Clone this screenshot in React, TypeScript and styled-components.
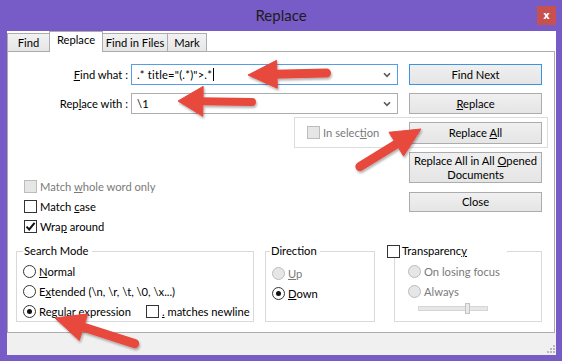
import React from 'react';
import styled, { createGlobalStyle, css } from 'styled-components';

const GlobalStyle = createGlobalStyle`
	html, body {
		margin: 0;
		padding: 0;
	}
	body {
		font-family: Lato, "Noto Sans", sans-serif;
		font-size: 11.2px;
		color: #000;
	}
	fieldset, legend {
		margin: 0;
		padding: 0;
	}
`;

const Screen = styled.div`
	position: relative;
	width: 562px;
	height: 361px;
	background: #775bc6;
	display: flex;
	flex-direction: column;
	overflow: hidden;
`;

const TitleBar = styled.div`
	height: 31px;
	flex-shrink: 0;
	display: grid;
	grid-template-columns: 1fr auto 1fr;
	align-items: start;
	padding: 0 6px;
`;

const Title = styled.div`
	grid-column: 2;
	font-size: 15px;
	line-height: 31px;
	color: #1c1c1c;
`;

const CloseButton = styled.div`
	grid-column: 3;
	justify-self: end;
	margin-top: 6px;
	width: 19px;
	height: 19px;
	background: #c75050;
	color: #fff;
	font: bold 10px "DejaVu Sans", sans-serif;
	display: flex;
	align-items: center;
	justify-content: center;
`;

const Client = styled.div`
	flex: 1;
	margin: 0 6px 6px 7px;
	background: #fff;
	display: flex;
	flex-direction: column;
`;

const TabStrip = styled.div`
	height: 20px;
	display: flex;
	align-items: flex-end;
	position: relative;
	z-index: 1;
`;

const Tab = styled.div<{ $w: number; $active?: boolean }>`
	width: ${(p) => p.$w}px;
	height: 18px;
	box-sizing: border-box;
	margin-right: -1px;
	border: 1px solid #acacac;
	border-bottom: none;
	background: linear-gradient(#f2f2f2, #e6e6e6);
	display: flex;
	align-items: center;
	justify-content: center;
	${(p) =>
		p.$active &&
		css`
			height: 21px;
			margin-bottom: -1px;
			background: #fff;
			align-items: flex-start;
			padding-top: 1px;
		`}
`;

const Page = styled.div`
	height: 282px;
	box-sizing: border-box;
	margin-right: 1px;
	border: 1px solid #acacac;
	display: flex;
	flex-direction: column;
`;

const FieldRow = styled.div<{ $top: number }>`
	display: flex;
	align-items: center;
	height: 21px;
	margin-top: ${(p) => p.$top}px;
`;

const FieldLabel = styled.div`
	width: 120px;
	text-align: right;
`;

const Combo = styled.div<{ $focused?: boolean }>`
	width: 267px;
	height: 21px;
	box-sizing: border-box;
	margin-left: 3px;
	border: 1px solid ${(p) => (p.$focused ? '#569de5' : '#abadb3')};
	display: flex;
	align-items: center;
	padding: 0 6px 0 5px;
`;

const ComboText = styled.span`
	flex: 1;
	display: flex;
	align-items: center;
	white-space: pre;
	letter-spacing: 0.2px;
`;

const Caret = styled.span`
	width: 1px;
	height: 13px;
	background: #000;
	margin-left: 1px;
`;

const Button = styled.div<{ $h?: number; $default?: boolean }>`
	width: 133px;
	height: ${(p) => p.$h ?? 21}px;
	box-sizing: border-box;
	flex-shrink: 0;
	border: 1px solid ${(p) => (p.$default ? '#3c93e4' : '#acacac')};
	background: linear-gradient(#f0f0f0, #e5e5e5);
	display: flex;
	align-items: center;
	justify-content: center;
	text-align: center;
	line-height: 14px;
	white-space: nowrap;
`;

const RowButton = styled(Button)`
	margin-left: 11px;
`;

const SelectionBox = styled.div`
	margin: 3px 0 0 286px;
	width: 254px;
	height: 31px;
	box-sizing: border-box;
	border: 1px solid #dcdcdc;
	display: flex;
	align-items: center;
	justify-content: space-between;
	padding: 0 5px 0 12px;
`;

const MiddleRow = styled.div`
	display: flex;
	align-items: flex-start;
`;

const Options = styled.div`
	margin-left: 16px;
	padding-top: 28px;
`;

const ButtonColumn = styled.div`
	margin: 0 12px 0 auto;
	padding-top: 4px;
	display: flex;
	flex-direction: column;
	gap: 9px;
`;

const OptionRow = styled.div<{ $disabled?: boolean }>`
	height: 20px;
	display: flex;
	align-items: center;
	gap: 3px;
	white-space: nowrap;
	color: ${(p) => (p.$disabled ? '#7a7a7a' : '#000')};
`;

const Box = styled.span<{ $disabled?: boolean }>`
	width: 13px;
	height: 13px;
	box-sizing: border-box;
	flex-shrink: 0;
	border: 1px solid ${(p) => (p.$disabled ? '#bcbcbc' : '#333')};
	background: ${(p) => (p.$disabled ? '#e6e6e6' : '#fff')};
	display: flex;
	align-items: center;
	justify-content: center;
`;

const SpacedBox = styled(Box)`
	margin-left: 12px;
`;

const Round = styled(Box)<{ $checked?: boolean }>`
	border-radius: 50%;
	&::after {
		content: '';
		width: 5px;
		height: 5px;
		border-radius: 50%;
		background: #111;
		display: ${(p) => (p.$checked ? 'block' : 'none')};
	}
`;

const Accel = styled.span`
	text-decoration: underline;
	text-underline-offset: 1px;
`;

const GroupRow = styled.div`
	display: flex;
	margin-top: 8px;
	padding-left: 8px;
`;

const Group = styled.fieldset<{ $w: number; $gap?: number }>`
	width: ${(p) => p.$w}px;
	height: 78px;
	box-sizing: border-box;
	margin-left: ${(p) => p.$gap ?? 0}px;
	border: 1px solid #d9d9d9;
	min-inline-size: 0;
`;

const Legend = styled.legend<{ $offset: number; $w?: number }>`
	margin-left: ${(p) => p.$offset}px;
	padding: 0 3px 0 1px;
	line-height: 14px;
	${(p) =>
		p.$w &&
		css`
			width: ${p.$w}px;
			box-sizing: border-box;
			padding: 0;
		`}
`;

const LegendCheck = styled.span`
	display: flex;
	align-items: center;
	gap: 2px;
`;

const GroupBody = styled.div<{ $top: number; $left: number }>`
	padding: ${(p) => p.$top}px 0 0 ${(p) => p.$left}px;
`;

const Slider = styled.div`
	margin: 2px 0 0 10px;
	width: 70px;
	height: 11px;
	display: flex;
	align-items: center;
	position: relative;
`;

const SliderTrack = styled.div`
	flex: 1;
	height: 3px;
	background: #e7e7e7;
	border: 1px solid #d6d6d6;
`;

const SliderThumb = styled.div`
	position: absolute;
	left: 47px;
	top: 0;
	width: 5px;
	height: 11px;
	box-sizing: border-box;
	background: #e9e9e9;
	border: 1px solid #c2c2c2;
`;

const StatusStrip = styled.div`
	flex: 1;
	background: #f0f0f0;
	display: flex;
	justify-content: flex-end;
	align-items: flex-end;
	padding: 0 1px 2px 0;
`;

const Overlay = styled.svg`
	position: absolute;
	left: 0;
	top: 0;
	pointer-events: none;
`;

const Chevron = () => (
	<svg width="8" height="6" viewBox="0 0 8 6">
		<path d="M1 1.2 L4 4.4 L7 1.2" fill="none" stroke="#5a5a5a" strokeWidth="1.6" />
	</svg>
);

const Tick = () => (
	<svg width="11" height="11" viewBox="0 0 11 11">
		<path d="M1.5 5.6 L4.2 8.4 L9.6 1.8" fill="none" stroke="#111" strokeWidth="2" />
	</svg>
);

const Grip = () => (
	<svg width="10" height="10" viewBox="0 0 10 10">
		{[
			[8, 2],
			[5, 5],
			[8, 5],
			[2, 8],
			[5, 8],
			[8, 8],
		].map(([x, y]) => (
			<rect key={`${x}-${y}`} x={x} y={y} width="2" height="2" fill="#b8b8b8" />
		))}
	</svg>
);

type ArrowSpec = {
	tip: [number, number];
	tail: [number, number];
	head: number;
	half: number;
	shaft: number;
};

const arrows: ArrowSpec[] = [
	{ tip: [248, 75], tail: [331, 73], head: 29, half: 14, shaft: 9 },
	{ tip: [178, 101], tail: [256, 102], head: 25, half: 15, shaft: 8 },
	{ tip: [421, 129], tail: [356, 169], head: 29, half: 14, shaft: 9 },
	{ tip: [55, 318], tail: [139, 345], head: 30, half: 14, shaft: 9 },
];

const Arrow: React.FC<ArrowSpec> = ({ tip, tail, head, half, shaft }) => {
	const dx = tail[0] - tip[0];
	const dy = tail[1] - tip[1];
	const len = Math.hypot(dx, dy);
	const ux = dx / len;
	const uy = dy / len;
	const bx = tip[0] + ux * head;
	const by = tip[1] + uy * head;
	const nx = -uy;
	const ny = ux;
	const points = [
		`${tip[0]},${tip[1]}`,
		`${bx + nx * half},${by + ny * half}`,
		`${bx - nx * half},${by - ny * half}`,
	].join(' ');
	return (
		<g filter="url(#arrowShadow)">
			<line
				x1={bx - ux * 3}
				y1={by - uy * 3}
				x2={tail[0] - ux * shaft * 0.5}
				y2={tail[1] - uy * shaft * 0.5}
				stroke="#e8483e"
				strokeWidth={shaft}
				strokeLinecap="round"
			/>
			<polygon points={points} fill="#e8483e" stroke="#e8483e" strokeWidth="1" strokeLinejoin="round" />
		</g>
	);
};

export default function App() {
	return (
		<>
			<GlobalStyle />
			<Screen>
				<TitleBar>
					<Title>Replace</Title>
					<CloseButton>x</CloseButton>
				</TitleBar>

				<Client>
					<TabStrip>
						<Tab $w={43}>Find</Tab>
						<Tab $w={54} $active>
							Replace
						</Tab>
						<Tab $w={66}>Find in Files</Tab>
						<Tab $w={40}>Mark</Tab>
					</TabStrip>

					<Page>
						<FieldRow $top={12}>
							<FieldLabel>
								<Accel>F</Accel>ind what :
							</FieldLabel>
							<Combo $focused>
								<ComboText>
									{'.* title="(.*)">.*'}
									<Caret />
								</ComboText>
								<Chevron />
							</Combo>
							<RowButton $default>Find Next</RowButton>
						</FieldRow>

						<FieldRow $top={8}>
							<FieldLabel>
								Rep<Accel>l</Accel>ace with :
							</FieldLabel>
							<Combo>
								<ComboText>{'\\1'}</ComboText>
								<Chevron />
							</Combo>
							<RowButton>
								<span>
									<Accel>R</Accel>eplace
								</span>
							</RowButton>
						</FieldRow>

						<SelectionBox>
							<OptionRow $disabled>
								<Box $disabled />
								<span>
									In selec<Accel>t</Accel>ion
								</span>
							</OptionRow>
							<Button $h={22}>
								<span>
									Replace <Accel>A</Accel>ll
								</span>
							</Button>
						</SelectionBox>

						<MiddleRow>
							<Options>
								<OptionRow $disabled>
									<Box $disabled />
									<span>
										Match <Accel>w</Accel>hole word only
									</span>
								</OptionRow>
								<OptionRow>
									<Box />
									<span>
										Match <Accel>c</Accel>ase
									</span>
								</OptionRow>
								<OptionRow>
									<Box>
										<Tick />
									</Box>
									<span>
										Wra<Accel>p</Accel> around
									</span>
								</OptionRow>
							</Options>
							<ButtonColumn>
								<Button $h={31}>
									<span>
										Replace All in All <Accel>O</Accel>pened
										<br />
										Documents
									</span>
								</Button>
								<Button $h={20}>Close</Button>
							</ButtonColumn>
						</MiddleRow>

						<GroupRow>
							<Group $w={238}>
								<Legend $offset={6}>Search Mode</Legend>
								<GroupBody $top={3} $left={6}>
									<OptionRow>
										<Round />
										<span>
											<Accel>N</Accel>ormal
										</span>
									</OptionRow>
									<OptionRow>
										<Round />
										<span>
											E<Accel>x</Accel>tended {'(\\n, \\r, \\t, \\0, \\x...)'}
										</span>
									</OptionRow>
									<OptionRow>
										<Round $checked />
										<span>
											Re<Accel>g</Accel>ular expression
										</span>
										<SpacedBox />
										<span>
											<Accel>.</Accel> matches newline
										</span>
									</OptionRow>
								</GroupBody>
							</Group>

							<Group $w={110} $gap={11}>
								<Legend $offset={4}>Direction</Legend>
								<GroupBody $top={5} $left={6}>
									<OptionRow $disabled>
										<Round $disabled />
										<span>
											<Accel>U</Accel>p
										</span>
									</OptionRow>
									<OptionRow>
										<Round $checked />
										<span>
											<Accel>D</Accel>own
										</span>
									</OptionRow>
								</GroupBody>
							</Group>

							<Group $w={148} $gap={19}>
								<Legend $offset={-8} $w={120}>
									<LegendCheck>
										<Box />
										<span>
											Transparenc<Accel>y</Accel>
										</span>
									</LegendCheck>
								</Legend>
								<GroupBody $top={3} $left={13}>
									<OptionRow $disabled>
										<Round $disabled />
										<span>On losing focus</span>
									</OptionRow>
									<OptionRow $disabled>
										<Round $disabled />
										<span>Always</span>
									</OptionRow>
									<Slider>
										<SliderTrack />
										<SliderThumb />
									</Slider>
								</GroupBody>
							</Group>
						</GroupRow>
					</Page>

					<StatusStrip>
						<Grip />
					</StatusStrip>
				</Client>

				<Overlay width="562" height="361" viewBox="0 0 562 361">
					<defs>
						<filter id="arrowShadow" x="-20%" y="-30%" width="140%" height="160%">
							<feDropShadow dx="1" dy="2" stdDeviation="1.2" floodColor="#000" floodOpacity="0.3" />
						</filter>
					</defs>
					{arrows.map((a, i) => (
						<Arrow key={i} {...a} />
					))}
				</Overlay>
			</Screen>
		</>
	);
}
